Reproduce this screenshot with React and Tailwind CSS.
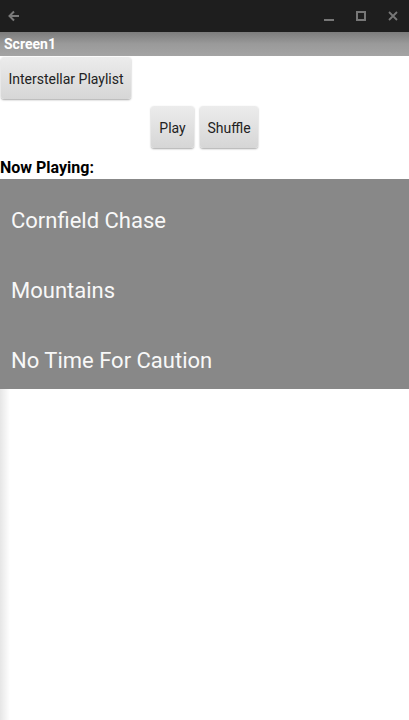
import React from "react";

export default function App() {
  const songs = ["Cornfield Chase", "Mountains", "No Time For Caution"];
  return (
    <div className="w-[409px] h-[720px] bg-white flex flex-col overflow-hidden" style={{ fontFamily: "Roboto, 'Liberation Sans', sans-serif" }}>
      <div className="h-[32px] bg-[#1e1e1e] flex items-center px-[8px] shrink-0">
        <svg width="12" height="12" viewBox="0 0 12 12" className="ml-[0px]">
          <path d="M11 6H2M6 1.5L1.5 6L6 10.5" stroke="#7a7a7a" strokeWidth="2" fill="none" />
        </svg>
        <div className="flex-1" />
        <div className="flex items-center gap-[22px] mr-[3px]">
          <svg width="10" height="10" viewBox="0 0 10 10"><path d="M0 9h10" stroke="#777" strokeWidth="2" /></svg>
          <svg width="10" height="10" viewBox="0 0 10 10"><rect x="1" y="1" width="8" height="8" stroke="#777" strokeWidth="2" fill="none" /></svg>
          <svg width="10" height="10" viewBox="0 0 10 10"><path d="M1 1L9 9M9 1L1 9" stroke="#777" strokeWidth="1.8" /></svg>
        </div>
      </div>
      <div className="h-[24px] bg-gradient-to-b from-[#7c7c7c] via-[#9a9a9a] to-[#a4a4a4] flex items-center px-[4px] shrink-0">
        <span className="text-white font-bold text-[14px]">Screen1</span>
      </div>
      <div className="pl-[1px] pt-[1px] shrink-0">
        <button className="h-[42px] w-[130px] pt-[2px] rounded-[3px] bg-gradient-to-b from-[#ececec] to-[#d6d6d6] shadow-[0_1px_2px_rgba(0,0,0,0.35)] text-[14px] text-[#222]">
          Interstellar Playlist
        </button>
      </div>
      <div className="flex justify-center gap-[6px] mt-[7px] shrink-0">
        <button className="h-[42px] w-[43px] pt-[2px] rounded-[3px] bg-gradient-to-b from-[#ececec] to-[#d6d6d6] shadow-[0_1px_2px_rgba(0,0,0,0.35)] text-[14px] text-[#222]">Play</button>
        <button className="h-[42px] w-[58px] pt-[2px] rounded-[3px] bg-gradient-to-b from-[#ececec] to-[#d6d6d6] shadow-[0_1px_2px_rgba(0,0,0,0.35)] text-[14px] text-[#222]">Shuffle</button>
      </div>
      <div className="mt-[9px] h-[22px] flex items-center text-[16px] font-bold text-black leading-none shrink-0">Now Playing:</div>
      <div className="bg-[#888888] shrink-0">
        {songs.map((s) => (
          <div key={s} className="h-[70px] flex items-center pt-[12px] pl-[11px] text-[22px] text-[#f8f8f8]">{s}</div>
        ))}
      </div>
      <div className="flex-1 flex">
        <div className="w-[10px] bg-gradient-to-r from-[#e6e6e6] to-white" />
      </div>
    </div>
  );
}
